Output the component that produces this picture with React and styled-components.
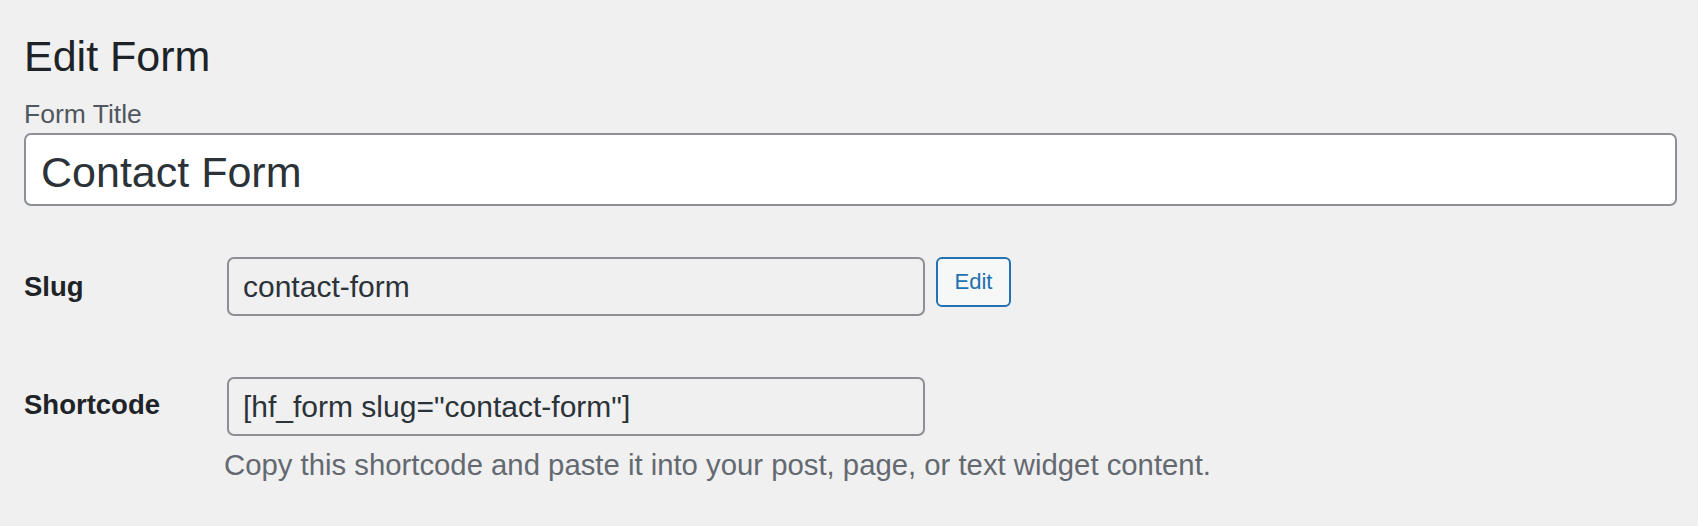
import React from 'react';
import styled, { createGlobalStyle } from 'styled-components';

const GlobalStyle = createGlobalStyle`
  html, body {
    margin: 0;
    padding: 0;
    background: #f0f0f1;
  }
  body {
    font-family: "Liberation Sans", Arial, sans-serif;
    color: #1d2327;
  }
`;

const Page = styled.div`
  display: flex;
  flex-direction: column;
  padding: 32px 21px 0 24px;
  box-sizing: border-box;
  min-height: 526px;
`;

const Heading = styled.h1`
  margin: 0;
  font-size: 43px;
  line-height: 48px;
  font-weight: 400;
  color: #1d2327;
`;

const TitleLabel = styled.label`
  margin-top: 19px;
  font-size: 26.5px;
  line-height: 30px;
  color: #50575e;
`;

const TitleInput = styled.input`
  margin-top: 4px;
  box-sizing: border-box;
  width: 100%;
  height: 73px;
  padding: 13px 15px 8px;
  border: 2px solid #8c8f94;
  border-radius: 7px;
  background: #fff;
  font-family: "Liberation Sans", Arial, sans-serif;
  font-size: 43px;
  line-height: 48px;
  color: #2c3338;
  outline: none;
`;

const FormTable = styled.div`
  display: flex;
  flex-direction: column;
  gap: 61px;
  margin-top: 51px;
`;

const Row = styled.div`
  display: grid;
  grid-template-columns: 200px 1fr;
  align-items: start;
`;

const RowLabel = styled.label`
  margin-top: ${(p) => p.$offset}px;
  font-size: 27.5px;
  line-height: 32px;
  font-weight: 700;
  color: #1d2327;
`;

const Field = styled.div`
  display: flex;
  flex-direction: column;
`;

const FieldLine = styled.div`
  display: flex;
  align-items: flex-start;
  gap: 11px;
`;

const TextInput = styled.input`
  box-sizing: border-box;
  width: 698px;
  height: 59px;
  margin-left: 3px;
  padding: 0 14px;
  border: 2px solid #8c8f94;
  border-radius: 7px;
  background: #f0f0f1;
  font-family: "Liberation Sans", Arial, sans-serif;
  font-size: 30px;
  color: #2c3338;
  outline: none;
`;

const EditButton = styled.button`
  box-sizing: border-box;
  width: 75px;
  height: 50px;
  padding: 0;
  border: 2px solid #2271b1;
  border-radius: 6px;
  background: #f6f7f7;
  color: #2271b1;
  font-family: "Liberation Sans", Arial, sans-serif;
  font-size: 22px;
  cursor: pointer;
`;

const Help = styled.p`
  margin: 12px 0 0;
  font-size: 29.3px;
  line-height: 34px;
  color: #646970;
`;

export default function App() {
  return (
    <>
      <GlobalStyle />
      <Page>
        <Heading>Edit Form</Heading>
        <TitleLabel htmlFor="form-title">Form Title</TitleLabel>
        <TitleInput id="form-title" defaultValue="Contact Form" />
        <FormTable>
          <Row>
            <RowLabel $offset={14} htmlFor="form-slug">Slug</RowLabel>
            <Field>
              <FieldLine>
                <TextInput id="form-slug" defaultValue="contact-form" readOnly />
                <EditButton type="button">Edit</EditButton>
              </FieldLine>
            </Field>
          </Row>
          <Row>
            <RowLabel $offset={12} htmlFor="form-shortcode">Shortcode</RowLabel>
            <Field>
              <TextInput id="form-shortcode" defaultValue={'[hf_form slug="contact-form"]'} readOnly />
              <Help>Copy this shortcode and paste it into your post, page, or text widget content.</Help>
            </Field>
          </Row>
        </FormTable>
      </Page>
    </>
  );
}
